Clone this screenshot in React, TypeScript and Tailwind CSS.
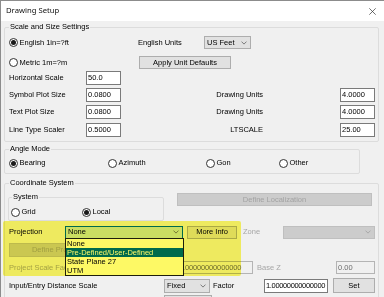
import React from 'react';

// Small Windows-style dialog controls, scaled down to match the screenshot.

function Radio({ checked, label }: { checked?: boolean; label: string }) {
  return (
    <div className="flex items-center gap-[1.5px]">
      <span className="flex h-[9px] w-[9px] shrink-0 items-center justify-center rounded-full border border-[#333333] bg-white">
        {checked && <span className="h-[5px] w-[5px] rounded-full bg-[#1a1a1a]" />}
      </span>
      <span>{label}</span>
    </div>
  );
}

function Chevron({ color = '#606060' }: { color?: string }) {
  return (
    <svg width="6" height="4" viewBox="0 0 6 4" className="shrink-0">
      <path d="M0.5 0.6 L3 3.1 L5.5 0.6" fill="none" stroke={color} strokeWidth="0.8" />
    </svg>
  );
}

function Select({ value, className, disabled, focused }: { value?: string; className: string; disabled?: boolean; focused?: boolean }) {
  const skin = disabled
    ? 'border-[#bfbfbf] bg-[#cccccc]'
    : focused
      ? 'border-[#006cc0] bg-[#cce4f7]'
      : 'border-[#adadad] bg-[#e1e1e1]';
  return (
    <div className={`flex shrink-0 items-center justify-between border pl-[2px] pr-[3px] ${skin} ${className}`}>
      <span>{value}</span>
      <Chevron color={disabled ? '#a0a0a0' : '#606060'} />
    </div>
  );
}

function TextBox({ value, className, disabled }: { value: string; className: string; disabled?: boolean }) {
  return (
    <div
      className={`flex shrink-0 items-center overflow-hidden whitespace-nowrap border pl-[1px] ${
        disabled ? 'border-[#b4b4b4] bg-[#f0f0f0] text-[#6d6d6d]' : 'border-[#7a7a7a] bg-white text-black'
      } ${className}`}
    >
      {value}
    </div>
  );
}

function Button({ label, className, disabled }: { label: string; className: string; disabled?: boolean }) {
  return (
    <div
      className={`flex shrink-0 items-center justify-center whitespace-nowrap border ${
        disabled ? 'border-[#bfbfbf] bg-[#cccccc] text-[#a3a3a3]' : 'border-[#adadad] bg-[#e1e1e1] text-black'
      } ${className}`}
    >
      {label}
    </div>
  );
}

function Group({ title, className, children }: { title: string; className: string; children: React.ReactNode }) {
  return (
    <fieldset className={`rounded-[2px] border border-[#dcdcdc] ${className}`}>
      <legend className="px-[1px] leading-[10px]">{title}</legend>
      {children}
    </fieldset>
  );
}

export default function App() {
  return (
    <div className="relative h-[297px] w-[384px] overflow-hidden border-l border-t border-[#8c8c8c] bg-[#f0f0f0] font-['Liberation_Sans',Arial,sans-serif] text-[7.5px] leading-none text-black">
      {/* Title bar */}
      <div className="flex h-[20px] items-center justify-between bg-white pl-[5px] pr-[8px]">
        <span className="font-['Noto_Sans',sans-serif] text-[7.7px] text-[#111]">Drawing Setup</span>
        <svg width="7" height="7" viewBox="0 0 7 7">
          <path d="M0.3 0.3 L6.7 6.7 M6.7 0.3 L0.3 6.7" stroke="#333" strokeWidth="0.7" />
        </svg>
      </div>

      <div className="pl-[3px]">
        {/* Scale and Size Settings */}
        <Group title="Scale and Size Settings" className="mt-[1px] w-[375px] pb-[4px] pl-[4px]">
          <div className="mt-[4px] flex h-[13px] items-center">
            <div className="w-[129px]">
              <Radio checked label="English 1in=?ft" />
            </div>
            <span className="w-[66px]">English Units</span>
            <Select value="US Feet" className="h-[13px] w-[47px]" />
          </div>
          <div className="mt-[7px] flex h-[13px] items-center">
            <div className="w-[130px]">
              <Radio label="Metric 1m=?m" />
            </div>
            <Button label="Apply Unit Defaults" className="h-[13px] w-[92px]" />
          </div>
          <div className="mt-[2px] flex h-[14px] items-center">
            <span className="w-[77px]">Horizontal Scale</span>
            <TextBox value="50.0" className="h-[14px] w-[35px]" />
          </div>
          <div className="mt-[3px] flex h-[14px] items-center">
            <span className="w-[77px]">Symbol Plot Size</span>
            <TextBox value="0.0800" className="h-[14px] w-[35px]" />
            <span className="w-[142px] text-right">Drawing Units</span>
            <span className="w-[77px]" />
            <TextBox value="4.0000" className="h-[14px] w-[35px]" />
          </div>
          <div className="mt-[3px] flex h-[14px] items-center">
            <span className="w-[77px]">Text Plot Size</span>
            <TextBox value="0.0800" className="h-[14px] w-[35px]" />
            <span className="w-[142px] text-right">Drawing Units</span>
            <span className="w-[77px]" />
            <TextBox value="4.0000" className="h-[14px] w-[35px]" />
          </div>
          <div className="mt-[4px] flex h-[14px] items-center">
            <span className="w-[77px]">Line Type Scaler</span>
            <TextBox value="0.5000" className="h-[14px] w-[35px]" />
            <span className="w-[142px] text-right">LTSCALE</span>
            <span className="w-[77px]" />
            <TextBox value="25.00" className="h-[14px] w-[35px]" />
          </div>
        </Group>

        {/* Angle Mode */}
        <Group title="Angle Mode" className="mt-[2px] w-[356px] pb-[5px] pl-[4px]">
          <div className="mt-[4px] flex h-[10px] items-center">
            <div className="w-[99px]">
              <Radio checked label="Bearing" />
            </div>
            <div className="w-[98px]">
              <Radio label="Azimuth" />
            </div>
            <div className="w-[73px]">
              <Radio label="Gon" />
            </div>
            <Radio label="Other" />
          </div>
        </Group>

        {/* Coordinate System */}
        <Group title="Coordinate System" className="mt-[4px] w-[375px] pb-[20px] pl-[4px]">
          <div className="flex items-start">
            <Group title="System" className="-ml-[1px] mt-[4px] w-[156px] pb-[3px] pl-[3px]">
              <div className="-ml-[1px] mt-[5px] flex h-[10px] items-center">
                <div className="w-[71px]">
                  <Radio label="Grid" />
                </div>
                <Radio checked label="Local" />
              </div>
            </Group>
            <Button label="Define Localization" disabled className="ml-[13px] mt-[5px] h-[13px] w-[195px]" />
          </div>

          <div className="mt-[4px] flex h-[14px] items-center">
            <span className="w-[56px]">Projection</span>
            <Select value="None" focused className="h-[13px] w-[118px]" />
            <Button label="More Info" className="ml-[4px] h-[13px] w-[50px]" />
            <span className="ml-[6px] w-[40px] text-[#a6a6a6]">Zone</span>
            <Select disabled className="h-[13px] w-[92px]" />
          </div>

          {/* the open list below covers most of this button, as in the screenshot */}
          <div className="mt-[4px] flex h-[14px] items-center">
            <Button label="Define Projection" disabled className="h-[14px] w-[103px]" />
          </div>

          <div className="mt-[4px] flex h-[13px] items-center">
            <span className="w-[168px] text-[#a6a6a6]">Project Scale Factor</span>
            <TextBox value="1.00000000000000" disabled className="h-[13px] w-[76px] tracking-[-0.15px]" />
            <span className="ml-[4px] w-[79px] text-[#a6a6a6]">Base Z</span>
            <TextBox value="0.00" disabled className="h-[13px] w-[39px]" />
          </div>

          <div className="mt-[4px] flex h-[15px] items-center">
            <span className="w-[155px]">Input/Entry Distance Scale</span>
            <Select value="Fixed" className="h-[14px] w-[46px]" />
            <span className="ml-[3px] w-[51px]">Factor</span>
            <TextBox value="1.00000000000000" className="h-[14px] w-[64px] tracking-[-0.35px]" />
            <Button label="Set" className="ml-[5px] h-[15px] w-[42px]" />
          </div>

          <div className="mt-[2px] flex">
            <div className="ml-[155px] h-[14px] w-[48px] border border-[#adadad] bg-[#e1e1e1]" />
          </div>
        </Group>
      </div>

      {/* Open projection dropdown list */}
      <div className="absolute left-[64px] top-[237px] w-[119px] border border-[#1e1e1e] bg-white">
        <div className="flex h-[9px] items-center pl-[1px]">None</div>
        <div className="flex h-[9px] items-center bg-[#006cc0] pl-[1px] text-white">Pre-Defined/User-Defined</div>
        <div className="flex h-[9px] items-center pl-[1px]">State Plane 27</div>
        <div className="flex h-[9px] items-center pl-[1px]">UTM</div>
      </div>

      {/* Yellow highlighter mark over the projection area */}
      <div className="pointer-events-none absolute left-[2px] top-[220px] h-[55px] w-[238px] rounded-[2px] bg-[#fdf965] mix-blend-multiply blur-[0.6px]" />
    </div>
  );
}
